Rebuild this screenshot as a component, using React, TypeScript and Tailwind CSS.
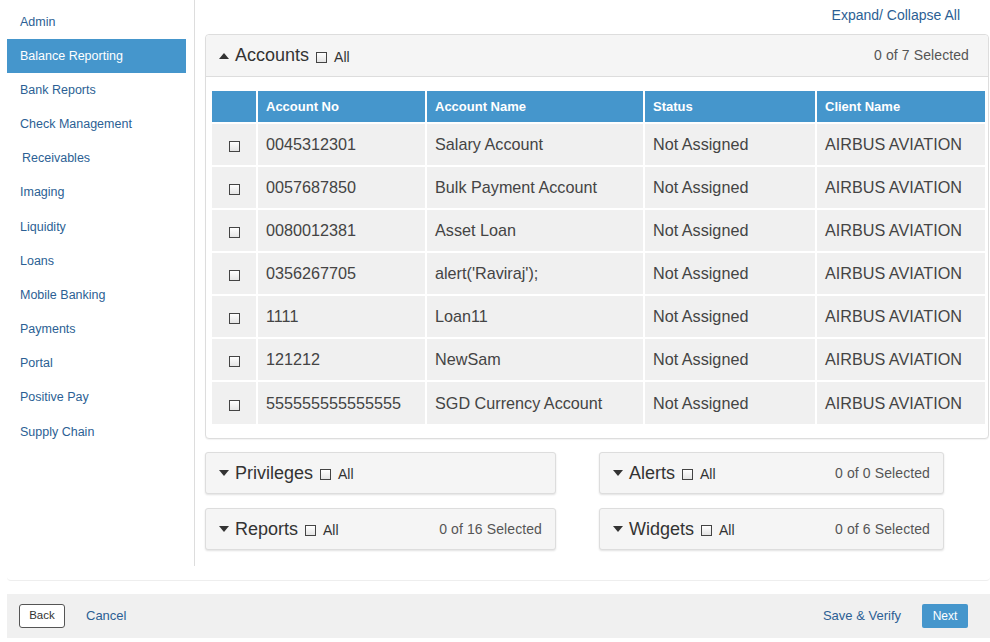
import React from "react"

const menu = [
  "Admin",
  "Balance Reporting",
  "Bank Reports",
  "Check Management",
  " Receivables",
  "Imaging",
  "Liquidity",
  "Loans",
  "Mobile Banking",
  "Payments",
  "Portal",
  "Positive Pay",
  "Supply Chain",
]

const accounts = [
  { no: "0045312301", name: "Salary Account" },
  { no: "0057687850", name: "Bulk Payment Account" },
  { no: "0080012381", name: "Asset Loan" },
  { no: "0356267705", name: "alert('Raviraj');" },
  { no: "1111", name: "Loan11" },
  { no: "121212", name: "NewSam" },
  { no: "555555555555555", name: "SGD Currency Account" },
]

function Box() {
  return <span className="inline-block w-[11px] h-[11px] border border-[#444] bg-gradient-to-b from-[#fff] to-[#e4e4e4]" />
}

function Caret({ up }: { up?: boolean }) {
  return (
    <svg width="10" height="6" viewBox="0 0 10 6" className="mr-[6px]">
      {up ? <path d="M0 6 L5 0 L10 6 Z" fill="#333" /> : <path d="M0 0 L5 6 L10 0 Z" fill="#333" />}
    </svg>
  )
}

function PanelHeading({ title, count, up, pr = "pr-[13px]", h = "h-[40px]" }: { title: string; count?: string; up?: boolean; pr?: string; h?: string }) {
  return (
    <div className={`flex items-center ${h} pl-[13px] ${pr}`}>
      <Caret up={up} />
      <span className="text-[18px] text-[#333]">{title}</span>
      <span className="ml-[7px] mt-[3px] flex items-center">
        <Box />
      </span>
      <span className="ml-[7px] mt-[3px] text-[14px] text-[#333]">All</span>
      {count && <span className="ml-auto text-[14px] tracking-[0.1px] text-[#555]">{count}</span>}
    </div>
  )
}

function SmallPanel({ title, count, w }: { title: string; count?: string; w: string }) {
  return (
    <div className={`${w} border border-[#ddd] rounded-[3px] bg-[#f5f5f5] shadow-[0_1px_2px_rgba(0,0,0,0.12)]`}>
      <PanelHeading title={title} count={count} />
    </div>
  )
}

export default function App() {
  return (
    <div className="w-[990px] h-[642px] bg-white font-['Liberation_Sans',Arial,sans-serif] overflow-hidden">
      <div className="ml-[7px] w-[983px] h-[581px] border-b border-[#eee] rounded-b-[4px] flex">
        {/* Sidebar */}
        <div className="w-[188px] pt-[5px] border-r border-[#ddd] h-[566px]">
          {menu.map((m) => (
            <div
              key={m}
              className={`w-[179px] h-[34.17px] flex items-center pl-[13px] text-[12.5px] ${
                m === "Balance Reporting" ? "bg-[#4596cc] text-white" : "text-[#2c5f94]"
              } ${m.startsWith(" ") ? "pl-[15px]" : ""}`}
            >
              {m.trim()}
            </div>
          ))}
        </div>

        {/* Main */}
        <div className="w-[784px] ml-[10px]">
          <div className="h-[34px] flex justify-end pr-[29px] pt-[5px] text-[14px] text-[#2c5f94]">
            Expand/ Collapse All
          </div>

          <div className="border border-[#ddd] rounded-[4px] bg-white shadow-[0_1px_1px_rgba(0,0,0,0.05)]">
            <div className="bg-[#f5f5f5] border-b border-[#ddd] rounded-t-[4px]">
              <PanelHeading title="Accounts" count="0 of 7 Selected" up pr="pr-[19px]" h="h-[41px]" />
            </div>
            <div className="pt-[14px] pb-[14px] pl-[6px] pr-[3px]">
              <table className="w-[773px] border-collapse table-fixed">
                <colgroup>
                  <col className="w-[45px]" />
                  <col className="w-[169px]" />
                  <col className="w-[218px]" />
                  <col className="w-[172px]" />
                  <col />
                </colgroup>
                <thead>
                  <tr className="bg-[#4596cc] h-[32px] text-white text-[13px] font-bold text-left">
                    <th className="border-r-2 border-white" />
                    <th className="pl-[8px] border-r-2 border-white">Account No</th>
                    <th className="pl-[8px] border-r-2 border-white">Account Name</th>
                    <th className="pl-[8px] border-r-2 border-white">Status</th>
                    <th className="pl-[8px]">Client Name</th>
                  </tr>
                </thead>
                <tbody>
                  {accounts.map((a) => (
                    <tr key={a.no} className="bg-[#f0f0f0] h-[43px] border-t-2 border-white text-[16.2px] text-[#444]">
                      <td className="text-center border-r-2 border-white pt-[4px]">
                        <Box />
                      </td>
                      <td className="pl-[8px] border-r-2 border-white">{a.no}</td>
                      <td className="pl-[8px] border-r-2 border-white">{a.name}</td>
                      <td className="pl-[8px] border-r-2 border-white">Not Assigned</td>
                      <td className="pl-[8px]">AIRBUS AVIATION</td>
                    </tr>
                  ))}
                </tbody>
              </table>
            </div>
          </div>

          <div className="flex mt-[13px]">
            <div className="flex flex-col gap-[14px]">
              <SmallPanel title="Privileges" w="w-[351px]" />
              <SmallPanel title="Reports" count="0 of 16 Selected" w="w-[351px]" />
            </div>
            <div className="flex flex-col gap-[14px] ml-[43px]">
              <SmallPanel title="Alerts" count="0 of 0 Selected" w="w-[345px]" />
              <SmallPanel title="Widgets" count="0 of 6 Selected" w="w-[345px]" />
            </div>
          </div>
        </div>
      </div>

      {/* Footer */}
      <div className="ml-[7px] mt-[13px] w-[983px] h-[44px] bg-[#f0f0f0] flex items-center px-[12px]">
        <button className="w-[46px] h-[24px] border border-[#555] rounded-[3px] bg-white text-[11.5px] text-[#333]">
          Back
        </button>
        <span className="ml-[21px] text-[13px] text-[#2c5f94]">Cancel</span>
        <span className="ml-auto text-[13px] text-[#2c5f94]">Save &amp; Verify</span>
        <button className="ml-[21px] mr-[10px] w-[46px] h-[24px] rounded-[2px] bg-[#4596cc] text-[12px] text-white">
          Next
        </button>
      </div>
    </div>
  )
}
